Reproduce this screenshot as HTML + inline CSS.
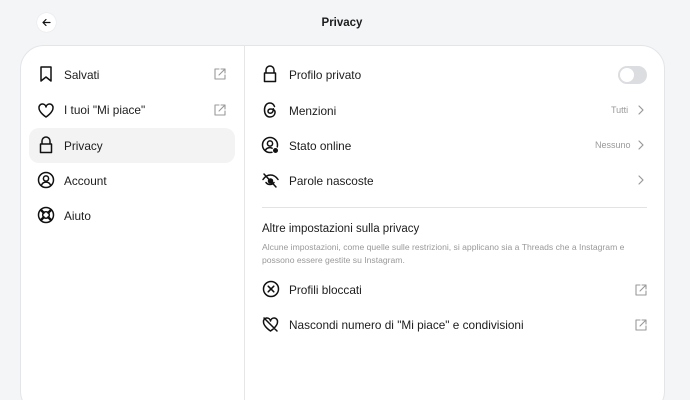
<!DOCTYPE html><html style="height:400px;overflow:hidden"><head><style>
*{margin:0;padding:0;box-sizing:border-box}
body{width:690px;height:400px;background:#f3f5f7;font-family:"Liberation Sans",sans-serif;position:relative;overflow:hidden;color:#1c1c1c}
.abs{position:absolute}
.card{left:20px;top:45px;width:645px;height:370px;background:#fff;border:1px solid #e3e5e8;border-radius:24px}
.vd{left:244px;top:46px;width:1px;height:354px;background:#e6e6e6}
.t{font-size:11.8px;line-height:14px;margin-top:1px}
svg{position:absolute;fill:none;stroke:#111;stroke-width:1.5;stroke-linecap:round;stroke-linejoin:round}
.ext{stroke:#999;stroke-width:1.1}
.chev{stroke:#999;stroke-width:1.2}
.g{font-size:9px;color:#999}
</style></head><body>
<div class="abs" style="left:37px;top:13px;width:19px;height:19px;border-radius:50%;background:#fff;box-shadow:0 0 1px #ccc"></div>
<svg style="left:41px;top:17px" width="11" height="11" viewBox="0 0 11 11"><path d="M9 5.5H2M5 2.5L2 5.5 5 8.5" stroke-width="1.2"/></svg>
<div class="abs" style="left:0;width:690px;top:17px;text-align:center;font-size:11.5px;font-weight:bold"><span style="position:relative;left:-3px">Privacy</span></div>
<div class="abs card"></div>
<div class="abs vd"></div>
<div class="abs" style="left:29px;top:128px;width:206px;height:35px;background:#f3f3f3;border-radius:10px"></div>

<svg style="left:38px;top:65px" width="17" height="18"><path d="M3 2h10v14l-5-4-5 4z"/></svg>
<div class="abs t" style="left:64px;top:67px">Salvati</div>
<svg class="ext" style="left:213px;top:67px" width="14" height="14"><path d="M6 2H2v10h10V8M8 2h4v4M12 2L6 8"/></svg>
<svg style="left:37px;top:102px" width="18" height="17"><path d="M9 15S2 10.5 2 6a3.5 3.5 0 0 1 7-1 3.5 3.5 0 0 1 7 1c0 4.5-7 9-7 9z"/></svg>
<div class="abs t" style="left:64px;top:102px">I tuoi "Mi piace"</div>
<svg class="ext" style="left:213px;top:103px" width="14" height="14"><path d="M6 2H2v10h10V8M8 2h4v4M12 2L6 8"/></svg>
<svg style="left:38px;top:136px" width="16" height="18"><path d="M4 8V5a4 4 0 0 1 8 0v3M2.5 8h11v8.5h-11z"/></svg>
<div class="abs t" style="left:64px;top:138px">Privacy</div>
<svg style="left:37px;top:171px" width="18" height="18"><circle cx="9" cy="9" r="7.5"/><circle cx="9" cy="7.5" r="2.6"/><path d="M4.5 14a5 5 0 0 1 9 0"/></svg>
<div class="abs t" style="left:64px;top:173px">Account</div>
<svg style="left:37px;top:206px" width="18" height="18"><circle cx="9" cy="9" r="7.5"/><circle cx="9" cy="9" r="3.3"/><path d="M4 4l2.7 2.7M14 4l-2.7 2.7M4 14l2.7-2.7M14 14l-2.7-2.7" stroke-width="2.4"/></svg>
<div class="abs t" style="left:64px;top:208px">Aiuto</div>

<svg style="left:262px;top:65px" width="16" height="18"><path d="M4 8V5a4 4 0 0 1 8 0v3M2.5 8h11v8.5h-11z"/></svg>
<div class="abs t" style="left:289px;top:67px">Profilo privato</div>
<div class="abs" style="left:618px;top:66px;width:29px;height:18px;border-radius:9px;background:#dcdde0"></div>
<div class="abs" style="left:620px;top:68px;width:14px;height:14px;border-radius:50%;background:#fff"></div>
<svg style="left:262px;top:101px" width="17" height="18"><path d="M12.5 5.5C11.5 3 9.5 2 8 2 4.5 2 2.5 5 2.5 9s2 7 5.5 7c2.5 0 4.5-1.5 5-4 .5-2.5-1.5-4-4-4-2 0-3 1-3 2.2 0 1.2 1 2 2.3 2 2 0 3-1.7 3-4.5"/></svg>
<div class="abs t" style="left:289px;top:103px">Menzioni</div>
<div class="abs g" style="left:611px;top:105px">Tutti</div>
<svg class="chev" style="left:636px;top:104px" width="10" height="12"><path d="M3 2l4 4-4 4"/></svg>
<svg style="left:261px;top:136px" width="20" height="20"><circle cx="9" cy="9" r="7.5"/><circle cx="9" cy="7.5" r="2.6"/><path d="M4.5 14a5 5 0 0 1 7 -1.5"/><circle cx="14.5" cy="14.5" r="3" fill="#111" stroke="#fff" stroke-width="1"/></svg>
<div class="abs t" style="left:289px;top:138px">Stato online</div>
<div class="abs g" style="left:595px;top:140px">Nessuno</div>
<svg class="chev" style="left:636px;top:139px" width="10" height="12"><path d="M3 2l4 4-4 4"/></svg>
<svg style="left:261px;top:171px" width="19" height="18"><path d="M2 8.5c2-3 4.5-4.5 7.5-4.5s5.5 1.5 7.5 4.5M5 11.5a5 5 0 0 0 8 0M3 3l12 13"/><circle cx="9.5" cy="10" r="2" fill="#111"/></svg>
<div class="abs t" style="left:289px;top:173px">Parole nascoste</div>
<svg class="chev" style="left:636px;top:174px" width="10" height="12"><path d="M3 2l4 4-4 4"/></svg>
<div class="abs" style="left:262px;top:207px;width:385px;height:1px;background:#e3e3e3"></div>
<div class="abs" style="left:262px;top:223px;font-size:11.5px;font-weight:500">Altre impostazioni sulla privacy</div>
<div class="abs g" style="left:262px;top:241px;width:390px;line-height:13px;font-size:8.6px">Alcune impostazioni, come quelle sulle restrizioni, si applicano sia a Threads che a Instagram e possono essere gestite su Instagram.</div>
<svg style="left:262px;top:280px" width="18" height="18"><circle cx="9" cy="9" r="7.5"/><path d="M6.2 6.2l5.6 5.6M11.8 6.2l-5.6 5.6"/></svg>
<div class="abs t" style="left:289px;top:282px">Profili bloccati</div>
<svg class="ext" style="left:634px;top:283px" width="14" height="14"><path d="M6 2H2v10h10V8M8 2h4v4M12 2L6 8"/></svg>
<svg style="left:261px;top:316px" width="19" height="17"><path d="M9.5 15S2.5 10.5 2.5 6a3.5 3.5 0 0 1 7-1 3.5 3.5 0 0 1 7 1c0 4.5-7 9-7 9zM3 2l13 13"/></svg>
<div class="abs t" style="left:289px;top:317px">Nascondi numero di "Mi piace" e condivisioni</div>
<svg class="ext" style="left:634px;top:318px" width="14" height="14"><path d="M6 2H2v10h10V8M8 2h4v4M12 2L6 8"/></svg>
</body></html>
